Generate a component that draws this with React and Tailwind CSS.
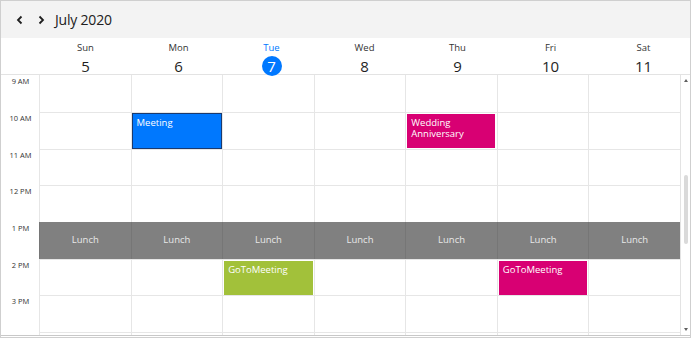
import React from "react";

const days = [
  { name: "Sun", num: "5" },
  { name: "Mon", num: "6" },
  { name: "Tue", num: "7", today: true },
  { name: "Wed", num: "8" },
  { name: "Thu", num: "9" },
  { name: "Fri", num: "10" },
  { name: "Sat", num: "11" },
];

const rows = [
  { label: "9 AM", h: "h-[37px]", first: true },
  { label: "10 AM", h: "h-[37px]" },
  { label: "11 AM", h: "h-[36px]" },
  { label: "12 PM", h: "h-[37px]" },
  { label: "1 PM", h: "h-[37px]", lunch: true },
  { label: "2 PM", h: "h-[36px]" },
  { label: "3 PM", h: "h-[37px]" },
  { label: "4 PM", h: "h-[37px]" },
];

const events = {
  "1-1": { title: "Meeting", cls: "bg-[#0078fe] border border-[#1a3a6e] h-full" },
  "1-4": { title: "Wedding Anniversary", cls: "bg-[#d80073] ml-px mr-[2px] mt-[1px] h-[34px]" },
  "5-2": { title: "GoToMeeting", cls: "bg-[#a2c13a] ml-px mr-px mt-[1px] h-[34px]" },
  "5-5": { title: "GoToMeeting", cls: "bg-[#d80073] ml-px mr-px mt-[1px] h-[34px]" },
};

function Chevron({ dir }) {
  return (
    <svg width="8" height="10" viewBox="0 0 8 10" className="text-[#1f1f1f]">
      {dir === "left" ? (
        <path d="M5.5 1.5 L2 5 L5.5 8.5" fill="none" stroke="currentColor" strokeWidth="1.8" />
      ) : (
        <path d="M2.5 1.5 L6 5 L2.5 8.5" fill="none" stroke="currentColor" strokeWidth="1.8" />
      )}
    </svg>
  );
}

export default function App() {
  return (
    <div
      className="w-[691px] h-[338px] overflow-hidden bg-white border border-[#cfcfcf] flex flex-col"
      style={{ fontFamily: '"Segoe UI", "Open Sans", "Noto Sans", sans-serif' }}
    >
      {/* title bar */}
      <div className="h-[37px] shrink-0 bg-[#f3f3f3] flex items-center pl-[15px] gap-[13px]">
        <Chevron dir="left" />
        <Chevron dir="right" />
        <span className="text-[14px] text-[#202020] ml-[-3px] leading-none tracking-[-0.2px]">July 2020</span>
      </div>

      {/* day header */}
      <div className="h-[37px] shrink-0 flex border-b border-[#e3e3e3]">
        <div className="w-[38px] shrink-0" />
        <div className="flex-1 grid grid-cols-7">
          {days.map((d) => (
            <div key={d.name} className="flex flex-col items-center pt-[4px]">
              <span
                className={`text-[9.5px] leading-[12px] ${d.today ? "text-[#0078ff]" : "text-[#333333]"}`}
              >
                {d.name}
              </span>
              {d.today ? (
                <span className="mt-[2px] w-[20px] h-[20px] rounded-full bg-[#0078ff] text-white text-[15px] leading-none flex items-center justify-center">
                  {d.num}
                </span>
              ) : (
                <span className="mt-[2px] h-[20px] text-[15px] leading-[20px] text-[#1f1f1f]">{d.num}</span>
              )}
            </div>
          ))}
        </div>
      </div>

      {/* body */}
      <div className="flex-1 flex overflow-hidden border-b border-[#c8c8c8] mb-[1px]">
        <div className="w-[38px] shrink-0 flex flex-col">
          {rows.map((r) => (
            <div key={r.label} className={`${r.h} shrink-0 flex justify-center pt-[1px] pl-[1px]`}>
              <span className="text-[7.5px] leading-[10px] text-[#333333]">{r.label}</span>
            </div>
          ))}
        </div>
        <div className="w-[641px] shrink-0 flex flex-col">
          {rows.map((r, ri) => (
            <div
              key={r.label}
              className={`${r.h} shrink-0 grid grid-cols-7 ${r.first || r.lunch ? "" : "border-t border-[#e6e6e6]"} ${r.lunch ? "bg-[#808080]" : ""}`}
            >
              {days.map((d, ci) => {
                const ev = events[`${ri}-${ci}`];
                return (
                  <div
                    key={d.name}
                    className={`border-l ${r.lunch ? "border-[#767676] flex items-center justify-center" : "border-[#e6e6e6]"} min-w-0`}
                  >
                    {r.lunch && <span className="text-[9.5px] text-[#e8e8e8]">Lunch</span>}
                    {ev && (
                      <div className={`${ev.cls} px-[4px] pt-[3px] text-white text-[9.5px] leading-[11px]`}>
                        {ev.title === "Wedding Anniversary" ? (
                          <>
                            Wedding
                            <br />
                            Anniversary
                          </>
                        ) : (
                          ev.title
                        )}
                      </div>
                    )}
                  </div>
                );
              })}
            </div>
          ))}
        </div>
        {/* scrollbar */}
        <div className="w-[10px] shrink-0 border-l border-[#e3e3e3] flex flex-col items-center bg-white">
          <div className="mt-[4px] w-0 h-0 border-l-[2.5px] border-r-[2.5px] border-b-[3px] border-l-transparent border-r-transparent border-b-[#606060]" />
          <div className="mt-[93px] w-[4px] h-[69px] rounded-full bg-[#dadada]" />
          <div className="mt-auto mb-[4px] w-0 h-0 border-l-[2.5px] border-r-[2.5px] border-t-[3px] border-l-transparent border-r-transparent border-t-[#606060]" />
        </div>
      </div>
    </div>
  );
}
